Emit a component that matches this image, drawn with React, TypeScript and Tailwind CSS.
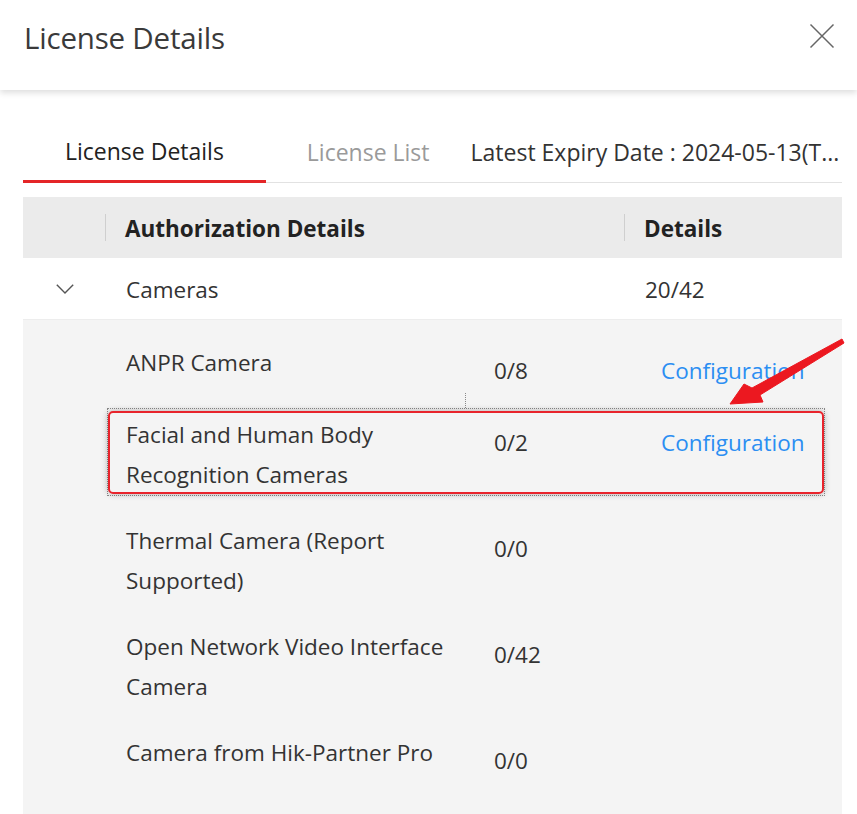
import React from 'react';

type CameraRow = {
  name: string[];
  count: string;
  link?: boolean;
  highlight?: boolean;
  h: string;
};

const ROWS: CameraRow[] = [
  { name: ['ANPR Camera'], count: '0/8', link: true, h: 'h-[72px]' },
  { name: ['Facial and Human Body', 'Recognition Cameras'], count: '0/2', link: true, highlight: true, h: 'h-[106px]' },
  { name: ['Thermal Camera (Report', 'Supported)'], count: '0/0', h: 'h-[106px]' },
  { name: ['Open Network Video Interface', 'Camera'], count: '0/42', h: 'h-[106px]' },
  { name: ['Camera from Hik-Partner Pro'], count: '0/0', h: 'h-[104px]' },
];

function CloseIcon() {
  return (
    <svg width="26" height="26" viewBox="0 0 26 26" className="text-[#666]">
      <path d="M1.5 1.5 L24.5 24.5 M24.5 1.5 L1.5 24.5" stroke="currentColor" strokeWidth="1.5" fill="none" />
    </svg>
  );
}

function Chevron() {
  return (
    <svg width="18" height="10" viewBox="0 0 18 10">
      <path d="M0.8 0.8 L9 9 L17.2 0.8" stroke="#555" strokeWidth="1.4" fill="none" />
    </svg>
  );
}

// pointer drawn over the table, tip lands on the highlighted row
function Arrow() {
  return (
    <svg width="130" height="80" viewBox="0 0 130 80" className="absolute left-[725px] top-[335px] pointer-events-none">
      <path
        d="M5 69 L19 49 L27 53 L117 4 L119 8 L35 60 L38 67 Z"
        fill="#ec1820"
        stroke="#ec1820"
        strokeWidth="1"
        strokeLinejoin="round"
      />
    </svg>
  );
}

export default function App() {
  return (
    <div className="relative w-[857px] h-[814px] bg-white overflow-hidden text-[#333]" style={{ fontFamily: "'Open Sans', 'Noto Sans', sans-serif" }}>
      {/* dialog header */}
      <div className="relative z-10 h-[90px] flex items-center justify-between pl-[24px] pr-[22px] bg-white shadow-[0_3px_6px_rgba(0,0,0,0.13)]">
        <h1 className="text-[29.5px] text-[#3a3a3a] -mt-[14px] tracking-[-0.2px]">License Details</h1>
        <div className="-mt-[18px]">
          <CloseIcon />
        </div>
      </div>

      <div className="pl-[23px] pr-[15px] pt-[30px]">
        {/* tabs */}
        <div className="flex h-[63px] border-b border-[#e2e2e2] text-[23px] whitespace-nowrap">
          <div className="flex items-center pt-[3px] px-[42px] border-b-[3px] border-[#e42527] -mb-px text-[#222]">License Details</div>
          <div className="flex items-center pt-[3px] pl-[41px] pr-[41px] text-[#9a9a9a]">License List</div>
          <div className="flex items-center pt-[3px] text-[#333]">Latest Expiry Date : 2024-05-13(T...</div>
        </div>

        {/* table */}
        <div className="mt-[14px]">
          <div className="flex items-center h-[61px] bg-[#ebebeb] text-[22.5px] font-bold text-[#222]">
            <div className="w-[83px] h-[27px] border-r border-[#cfcfcf]" />
            <div className="w-[519px] pl-[19px] h-[27px] flex items-center border-r border-[#cfcfcf] pt-[3px]">Authorization Details</div>
            <div className="pl-[19px] pt-[3px]">Details</div>
          </div>

          <div className="flex items-center h-[62px] bg-white text-[22.5px] border-b border-[#ededed]">
            <div className="w-[83px] flex justify-center pl-[1px]">
              <Chevron />
            </div>
            <div className="w-[519px] pl-[20px] pt-[3px]">Cameras</div>
            <div className="pl-[20px] pt-[3px]">20/42</div>
          </div>

          <div className="bg-[#f4f4f4] text-[22.5px]">
            {ROWS.map((row) => (
              <div key={row.count + row.name[0]} className={`relative flex ${row.h} pt-[23px]`}>
                <div className="w-[103px] shrink-0" />
                <div className="w-[368px] shrink-0 leading-[40px]">
                  {row.name.map((l) => (
                    <div key={l}>{l}</div>
                  ))}
                </div>
                <div className="w-[167px] shrink-0 leading-[40px] pt-[8px]">{row.count}</div>
                {row.link && <div className="leading-[40px] pt-[8px] text-[#2b8ef2]">Configuration</div>}
                {row.highlight && (
                  <>
                    <div className="absolute left-[84px] top-[16px] w-[718px] h-[88px] border border-dotted border-[#8a8a8a] pointer-events-none" />
                    <div className="absolute left-[442px] top-[1px] h-[15px] border-l border-dotted border-[#8a8a8a] pointer-events-none" />
                    <div className="absolute left-[85px] top-[19px] w-[716px] h-[83px] rounded-[5px] border-2 border-[#e8242c] shadow-[0_0_6px_rgba(0,0,0,0.3)] pointer-events-none" />
                  </>
                )}
              </div>
            ))}
          </div>
        </div>
      </div>

      <Arrow />
    </div>
  );
}
